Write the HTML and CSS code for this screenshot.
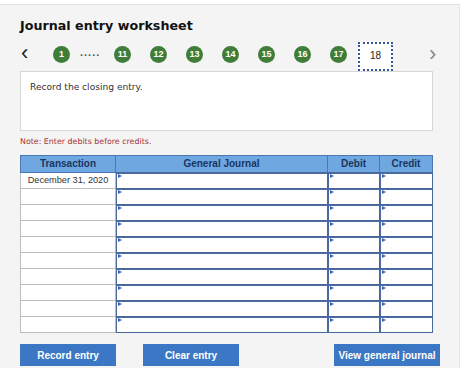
FILE: index.html
```html
<!DOCTYPE html>
<html>
<head>
<meta charset="utf-8">
<link rel="stylesheet" href="styles.css">
</head>
<body>
<div class="panel">
  <h1 class="title">Journal entry worksheet</h1>
  <div class="nav">
    <span class="arrow left">&lsaquo;</span>
    <span class="dot first">1</span>
    <span class="dots">.....</span>
    <span class="dot">11</span>
    <span class="dot">12</span>
    <span class="dot">13</span>
    <span class="dot">14</span>
    <span class="dot">15</span>
    <span class="dot">16</span>
    <span class="dot last">17</span>
    <span class="current">18</span>
    <span class="arrow right">&rsaquo;</span>
  </div>
  <div class="prompt">Record the closing entry.</div>
  <div class="note">Note: Enter debits before credits.</div>
  <div class="grid">
    <div class="hd">Transaction</div>
    <div class="hd">General Journal</div>
    <div class="hd">Debit</div>
    <div class="hd">Credit</div>

    <div class="tc">December 31, 2020</div><div class="ic"></div><div class="ic"></div><div class="ic"></div>
    <div class="tc"></div><div class="ic"></div><div class="ic"></div><div class="ic"></div>
    <div class="tc"></div><div class="ic"></div><div class="ic"></div><div class="ic"></div>
    <div class="tc"></div><div class="ic"></div><div class="ic"></div><div class="ic"></div>
    <div class="tc"></div><div class="ic"></div><div class="ic"></div><div class="ic"></div>
    <div class="tc"></div><div class="ic"></div><div class="ic"></div><div class="ic"></div>
    <div class="tc"></div><div class="ic"></div><div class="ic"></div><div class="ic"></div>
    <div class="tc"></div><div class="ic"></div><div class="ic"></div><div class="ic"></div>
    <div class="tc"></div><div class="ic"></div><div class="ic"></div><div class="ic"></div>
    <div class="tc"></div><div class="ic"></div><div class="ic"></div><div class="ic"></div>
  </div>
  <div class="buttons">
    <button class="btn record">Record entry</button>
    <button class="btn clear">Clear entry</button>
    <button class="btn view">View general journal</button>
  </div>
</div>
</body>
</html>
```
FILE: styles.css
```css
html, body {
  margin: 0;
  padding: 0;
  background: #ffffff;
}
body {
  width: 474px;
  height: 383px;
  overflow: hidden;
  font-family: "DejaVu Sans", Verdana, sans-serif;
}
.panel {
  margin-top: 4px;
  width: 460px;
  height: 364px;
  box-sizing: border-box;
  background: #f4f4f4;
  border-top: 1px solid #e2e2e2;
  border-right: 1px solid #e6e6e6;
  padding-left: 20px;
  display: flex;
  flex-direction: column;
  align-items: flex-start;
}
.title {
  margin: 12px 0 0 0;
  font-size: 12.7px;
  line-height: 18px;
  font-weight: bold;
  color: #111;
}
.nav {
  margin-top: 7px;
  height: 29px;
  display: flex;
  align-items: flex-start;
  font-family: "Liberation Sans", Arial, sans-serif;
}
.arrow {
  font-size: 22px;
  line-height: 22px;
  margin-top: 0;
  color: #222;
}
.arrow.left {
  margin-left: 1px;
  width: 32px;
}
.arrow.right {
  color: #888;
  margin-left: 36px;
  margin-top: 1px;
}
.dot {
  width: 17px;
  height: 17px;
  border-radius: 50%;
  background: #3f7d38;
  color: #fff;
  font-size: 9px;
  font-weight: bold;
  line-height: 17px;
  text-align: center;
  margin-top: 4px;
  margin-right: 19px;
  flex: none;
}
.dot.first {
  margin-right: 10px;
}
.dot.last {
  margin-right: 11px;
}
.dots {
  width: 25px;
  margin-right: 9px;
  font-size: 11px;
  font-weight: bold;
  color: #555;
  line-height: 21px;
  letter-spacing: 1px;
}
.current {
  width: 35px;
  height: 29px;
  box-sizing: border-box;
  border: 2px dotted #35569c;
  background: #fff;
  font-size: 10px;
  color: #222;
  text-align: center;
  padding-top: 6px;
  flex: none;
}
.prompt {
  width: 413px;
  height: 60px;
  box-sizing: border-box;
  background: #fff;
  border: 1px solid #d6d6d6;
  padding: 10px 0 0 9px;
  font-size: 9.1px;
  color: #333;
}
.note {
  margin-top: 5px;
  font-size: 7.9px;
  color: #a8323a;
  line-height: 12px;
}
.grid {
  margin-top: 7px;
  width: 413px;
  display: grid;
  grid-template-columns: 96px 212px 52px 53px;
  grid-auto-rows: 16px;
  grid-template-rows: 18px;
  font-family: "Liberation Sans", Arial, sans-serif;
  font-size: 10px;
}
.hd {
  background: #6fa7e1;
  border: 1px solid #4c78b2;
  border-left: none;
  color: #1b3560;
  font-weight: bold;
  text-align: center;
  line-height: 16px;
}
.hd:first-child {
  border-left: 1px solid #4c78b2;
}
.tc {
  background: #fff;
  border: 1px solid #bdbdbd;
  border-top: none;
  text-align: center;
  line-height: 15px;
  font-size: 9.2px;
  color: #333;
  box-sizing: border-box;
}
.ic {
  position: relative;
  background: #fff;
  border: 1px solid #4a6a9f;
  border-top: 2px solid #4a6a9f;
  box-sizing: border-box;
  margin-top: -1px;
  height: 17px;
}
.ic::before {
  content: "";
  position: absolute;
  left: 1px;
  top: 0;
  border-left: 4px solid #3b64b8;
  border-top: 2px solid transparent;
  border-bottom: 2px solid transparent;
}
.buttons {
  margin-top: 11px;
  width: 420px;
  display: flex;
}
.btn {
  height: 22px;
  border: none;
  background: #3b77c4;
  color: #fff;
  font-family: "Liberation Sans", Arial, sans-serif;
  font-weight: bold;
  font-size: 10px;
  padding: 0;
}
.record {
  width: 96px;
}
.clear {
  width: 96px;
  margin-left: 27px;
}
.view {
  width: 106px;
  margin-left: auto;
}
```
